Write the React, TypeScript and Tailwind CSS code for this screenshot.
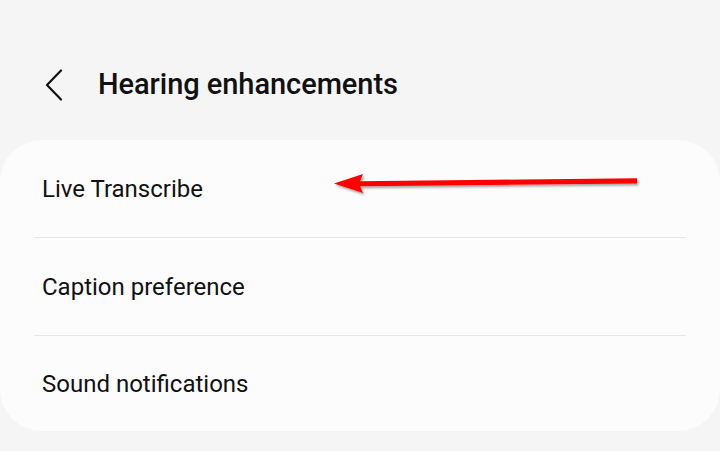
import React from "react";

const items = ["Live Transcribe", "Caption preference", "Sound notifications"];

function BackChevron() {
  return (
    <svg width="20" height="32" viewBox="0 0 20 32" fill="none">
      <path
        d="M17 1.5L3 16l14 14.5"
        stroke="#111"
        strokeWidth="2.2"
        strokeLinecap="round"
        strokeLinejoin="round"
      />
    </svg>
  );
}

function Arrow() {
  return (
    <svg
      className="pointer-events-none absolute left-[329px] top-[168px]"
      width="320"
      height="34"
      viewBox="0 0 320 34"
    >
      <defs>
        <filter id="sh" x="-5%" y="-50%" width="110%" height="200%">
          <feDropShadow dx="1.5" dy="2" stdDeviation="1.2" floodColor="#000" floodOpacity="0.35" />
        </filter>
      </defs>
      <g filter="url(#sh)">
        <path d="M30 13.2L308 10.2 308 15.6 30 18.2Z" fill="#ff0000" />
        <path d="M5 15.5L34 6 30 16 34 25Z" fill="#ff0000" />
      </g>
    </svg>
  );
}

export default function App() {
  return (
    <div
      className="relative h-[451px] w-[720px] overflow-hidden bg-[#f5f5f5]"
      style={{ fontFamily: "Roboto, 'Noto Sans', sans-serif" }}
    >
      <header className="flex h-[140px] items-center pt-[30px]">
        <div className="ml-[44px] flex w-[54px] items-center">
          <BackChevron />
        </div>
        <h1 className="text-[29px] font-medium tracking-[-0.05px] text-[#111]">
          Hearing enhancements
        </h1>
      </header>

      <section className="rounded-[42px] bg-[#fcfcfc] px-[34px]">
        {items.map((label, i) => (
          <div
            key={label}
            className={`flex items-center px-[8px] text-[24px] text-[#111] ${
              i < items.length - 1 ? "h-[98px] border-b border-[#e6e6e6]" : "h-[95px]"
            }`}
          >
            {label}
          </div>
        ))}
      </section>

      <Arrow />
    </div>
  );
}
